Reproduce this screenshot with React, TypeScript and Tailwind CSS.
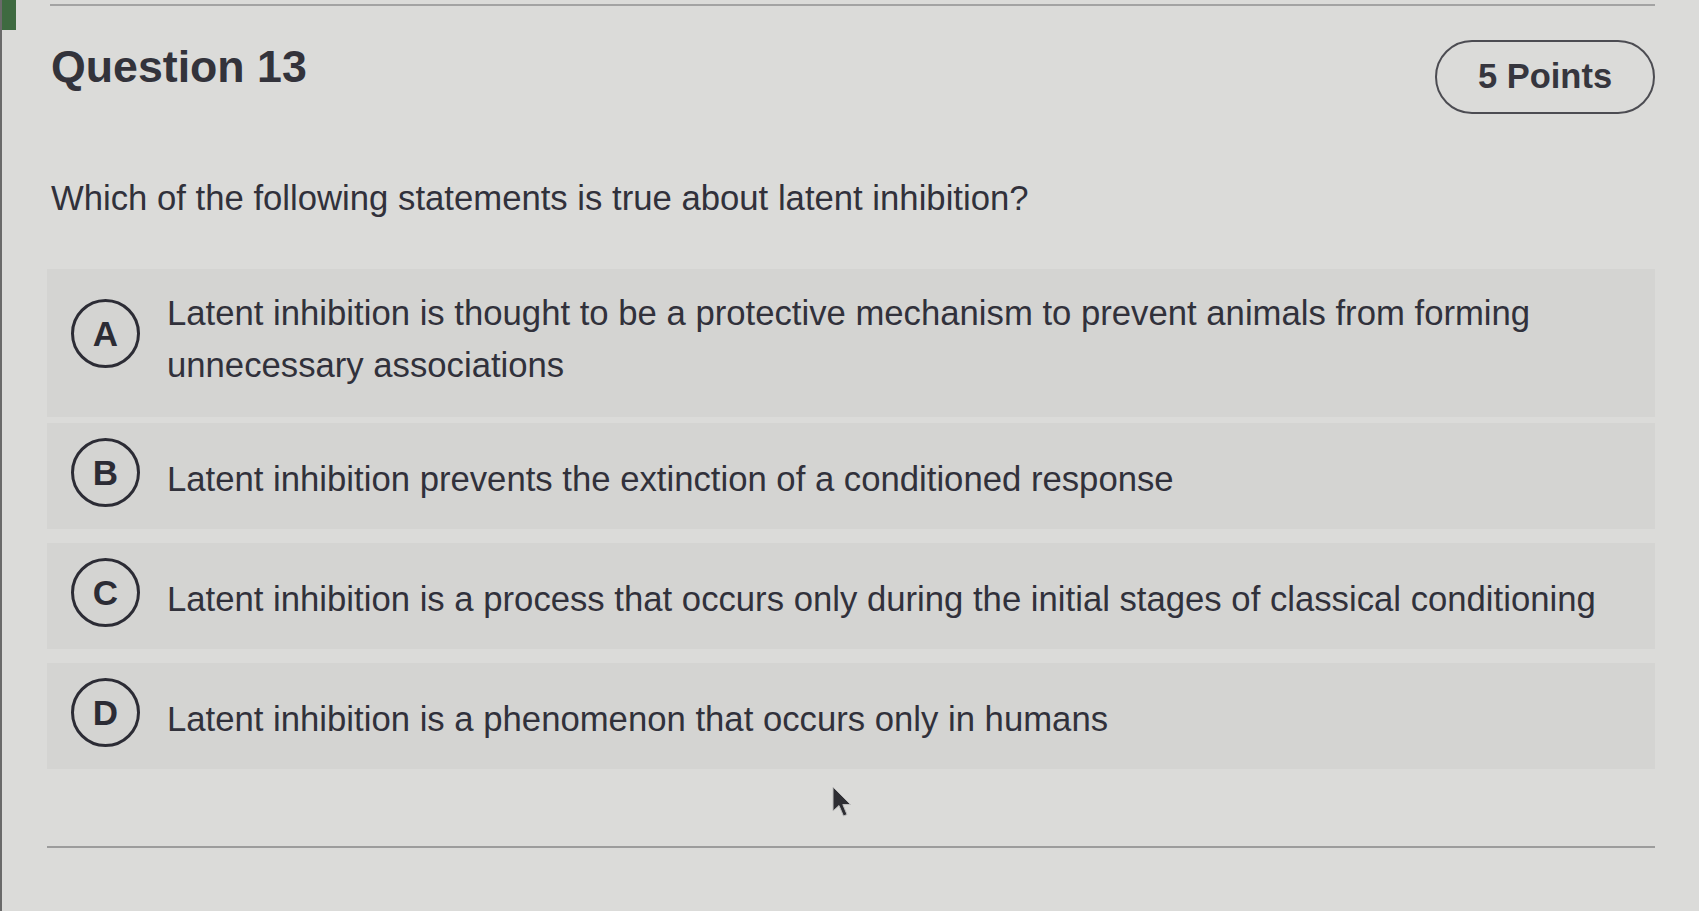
import React from "react";

const options = [
  { k: "A", t: "Latent inhibition is thought to be a protective mechanism to prevent animals from forming unnecessary associations", row: "pt-[8px] pb-[26px]", text: "mt-[10px]" },
  { k: "B", t: "Latent inhibition prevents the extinction of a conditioned response", row: "mt-[6px] pt-[15px] pb-[22px]", text: "mt-[14px]" },
  { k: "C", t: "Latent inhibition is a process that occurs only during the initial stages of classical conditioning", row: "mt-[14px] pt-[15px] pb-[22px]", text: "mt-[14px]" },
  { k: "D", t: "Latent inhibition is a phenomenon that occurs only in humans", row: "mt-[14px] pt-[15px] pb-[22px]", text: "mt-[14px]" },
];

export default function App() {
  return (
    <div
      className="relative w-[1699px] h-[911px] overflow-hidden bg-[#dbdbd9] text-[#31313b] border-l-2 border-[#6a6a6a]"
      style={{ fontFamily: '"Liberation Sans", Arial, Helvetica, sans-serif' }}
    >
      <div className="absolute left-0 top-0 w-[14px] h-[30px] bg-[#3e6a40]" />
      <div className="pl-[45px] pr-[44px]">
        <div className="mt-[4px] ml-[3px] border-t-2 border-[#a3a3a3]" />
        <div className="mt-[34px] flex items-start justify-between pl-[4px]">
          <h1 className="mt-[5px] text-[44.7px] leading-none font-bold text-[#33333b]">Question 13</h1>
          <div className="flex h-[74px] w-[220px] items-center justify-center rounded-full border-[2.5px] border-[#4c4c52] text-[34.5px] font-bold text-[#36363e]">
            5 Points
          </div>
        </div>
        <p className="mt-[67px] pl-[4px] text-[34.7px] leading-none">
          Which of the following statements is true about latent inhibition?
        </p>
        <div className="mt-[53px] flex flex-col">
          {options.map((o) => (
            <div
              key={o.k}
              className={`flex items-center gap-[27px] bg-[#d4d4d2] pl-[24px] ${o.row}`}
            >
              <div className="flex h-[69px] w-[69px] shrink-0 items-center justify-center rounded-full border-[3.5px] border-[#2c2c35] text-[35px] font-bold leading-none text-[#2c2c35]">
                {o.k}
              </div>
              <div className={`text-[34.7px] leading-[52px] ${o.text}`}>{o.t}</div>
            </div>
          ))}
        </div>
        <div className="mt-[77px] border-t-2 border-[#9c9c9c]" />
      </div>
      <svg
        className="absolute left-[830px] top-[786px]"
        width="22"
        height="32"
        viewBox="0 0 22 32"
      >
        <path d="M1 1 L1 25 L7 19.5 L11.5 30 L15 28.5 L10.8 18.5 L18.5 18.5 Z" fill="#2e2e33" stroke="#bdbdbd" strokeWidth="1" />
      </svg>
    </div>
  );
}
